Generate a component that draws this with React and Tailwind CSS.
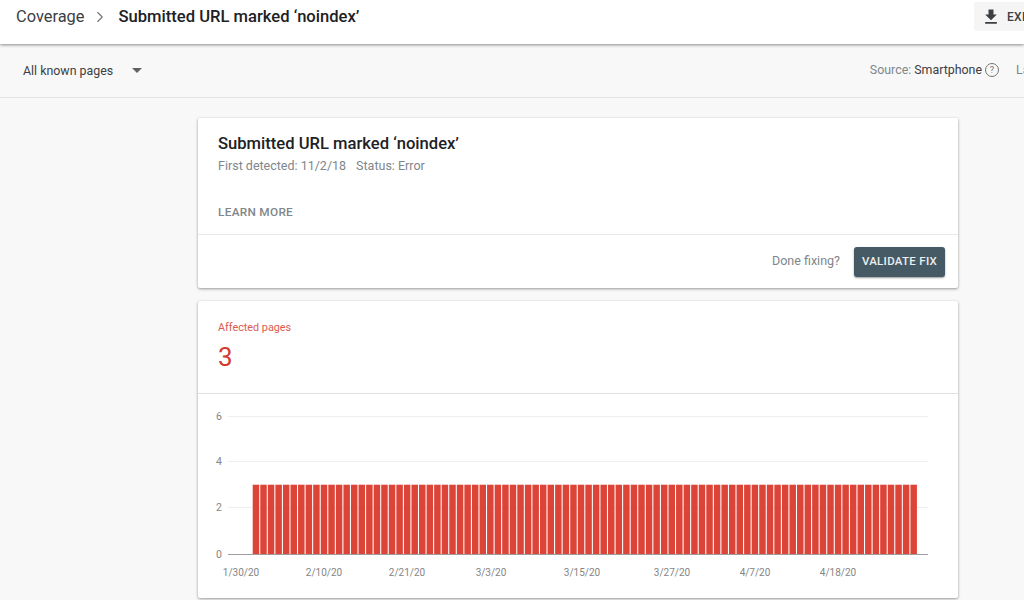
import React from 'react';
import { ChevronRight } from 'lucide-react';

const bars = Array.from({ length: 88 }, (_, i) => 54.7 + i * 7.56);

const yLabels = [
    { text: '6', y: 22 },
    { text: '4', y: 67 },
    { text: '2', y: 113 },
    { text: '0', y: 160 },
];

const xLabels = [
    { text: '1/30/20', x: 43 },
    { text: '2/10/20', x: 126 },
    { text: '2/21/20', x: 209 },
    { text: '3/3/20', x: 293 },
    { text: '3/15/20', x: 384 },
    { text: '3/27/20', x: 474 },
    { text: '4/7/20', x: 557 },
    { text: '4/18/20', x: 640 },
];

function Chart() {
    return (
        <svg width="760" height="204" className="block">
            {yLabels.map((l) => (
                <g key={l.text}>
                    {l.text !== '0' && <line x1="30" x2="730" y1={l.y + 0.5} y2={l.y + 0.5} stroke="#eeeeee" />}
                    <text x="24" y={l.y + 3.5} textAnchor="end" fontSize="10.5" fill="#858585">{l.text}</text>
                </g>
            ))}
            {bars.map((x) => (
                <rect key={x} x={x} y="90.7" width="6.5" height="69.3" fill="#dd4438" />
            ))}
            <line x1="30" x2="730" y1="160.5" y2="160.5" stroke="#9e9e9e" />
            {xLabels.map((l) => (
                <text key={l.text} x={l.x} y="181.5" textAnchor="middle" fontSize="10" fill="#858585">{l.text}</text>
            ))}
        </svg>
    );
}

export default function App() {
    return (
        <div className="w-[1024px] h-[600px] overflow-hidden bg-[#f8f8f8] font-['Roboto',sans-serif]">
            {/* Top bar */}
            <div className="relative z-10 h-[44px] bg-white shadow-[0_1px_3px_rgba(0,0,0,0.45)] flex items-start pl-4">
                <span className="mt-[7px] text-[16.4px] leading-[20px] text-[#3c4043]">Coverage</span>
                <ChevronRight className="mt-2 w-[18px] h-[18px] text-[#757575] ml-[7px] mr-[9px]" strokeWidth={1.5} />
                <span className="mt-[7px] text-[16.6px] leading-[20px] font-medium text-[#202124]">Submitted URL marked ‘noindex’</span>
                <div className="ml-auto mr-[-50px] mt-[2px] h-[29px] w-[100px] shrink-0 bg-[#f5f5f5] rounded-[2px] flex items-center pl-[7px] gap-[6px]">
                    <svg viewBox="0 0 24 24" className="w-[20px] h-[20px] text-[#3c4043]" fill="currentColor">
                        <path d="M19 9h-4V3H9v6H5l7 7 7-7zM5 18v2h14v-2H5z" />
                    </svg>
                    <span className="text-[12px] font-medium tracking-wide text-[#3c4043]">EXPORT</span>
                </div>
            </div>

            {/* Filter bar */}
            <div className="h-[54px] border-b border-[#e3e3e3] flex items-center pl-[23px] text-[12.4px]">
                <span className="mt-[2px] text-[#3c4043]">All known pages</span>
                <span className="ml-[19px] w-0 h-0 border-x-[5px] border-x-transparent border-t-[5px] border-t-[#616161]" />
                <div className="ml-auto mr-[-52px] flex items-center shrink-0">
                    <span className="text-[#80868b]">Source:</span>
                    <span className="ml-[3px] text-[#3c4043]">Smartphone</span>
                    <span className="ml-[3px] w-[14px] h-[14px] rounded-full border border-[#757575] text-[#757575] text-[9px] flex items-center justify-center">?</span>
                    <span className="ml-[17px] w-[60px] text-[#80868b]">Last</span>
                </div>
            </div>

            {/* Content */}
            <div className="w-[760px] ml-[198px] mt-5 flex flex-col gap-[13px]">
                <div className="h-[170px] bg-white rounded-[2px] shadow-[0_1px_3px_rgba(0,0,0,0.4)] flex flex-col">
                    <div className="h-[117px] border-b border-[#e8e8e8] px-5 pt-[15px]">
                        <div className="text-[16.6px] leading-[22px] font-medium text-[#202124]">Submitted URL marked ‘noindex’</div>
                        <div className="mt-[3px] text-[12.5px] leading-[16px] text-[#80868b] flex gap-[10px]">
                            <span>First detected: 11/2/18</span>
                            <span>Status: Error</span>
                        </div>
                        <div className="mt-[31px] text-[11.8px] leading-[14px] font-medium tracking-wide text-[#80868b]">LEARN MORE</div>
                    </div>
                    <div className="flex-1 flex items-center justify-end pr-[13px]">
                        <span className="text-[12.5px] text-[#80868b]">Done fixing?</span>
                        <span className="ml-[14px] w-[91px] h-[30px] bg-[#455a64] rounded-[3px] shadow-[0_1px_2px_rgba(0,0,0,0.4)] flex items-center justify-center text-[11.5px] font-medium tracking-wide text-[#eceff1]">VALIDATE FIX</span>
                    </div>
                </div>

                <div className="h-[297px] bg-white rounded-[2px] shadow-[0_1px_3px_rgba(0,0,0,0.4)]">
                    <div className="h-[93px] border-b border-[#e0e0e0] px-5 pt-[20px]">
                        <div className="text-[10.8px] leading-[13px] text-[#dd5a50]">Affected pages</div>
                        <div className="mt-[7px] text-[26px] leading-[32px] text-[#d33a2c]">3</div>
                    </div>
                    <Chart />
                </div>
            </div>
        </div>
    );
}
